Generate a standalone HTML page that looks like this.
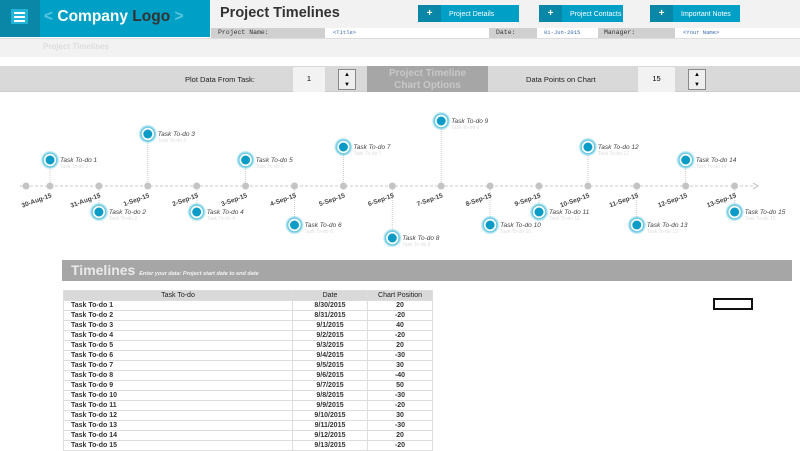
<!DOCTYPE html>
<html><head><meta charset="utf-8"><style>
*{margin:0;padding:0;box-sizing:border-box}
body{width:800px;height:450px;overflow:hidden;background:#fff;font-family:"Liberation Sans",sans-serif;position:relative}
.a{position:absolute}
.btn{position:absolute;top:5px;height:17px;background:#00a0c6;color:#fff;font-size:7px;line-height:17px}
.btn b{display:inline-block;width:23px;height:17px;background:#0a87a6;text-align:center;font-size:10px;margin-right:8px}
.mono{font-family:"Liberation Mono",monospace;font-size:6.5px;line-height:9px}
table{border-collapse:collapse;position:absolute;left:63px;top:290px;width:370px;font-size:7px;font-weight:bold;color:#333}
td,th{height:9.9px;line-height:9px;border:1px solid #ddd;padding:0}
th{background:#d9d9d9;font-weight:normal;color:#222}
td:first-child{padding-left:7px}
td:nth-child(2),td:nth-child(3){text-align:center}
</style></head><body>
<div class="a" style="left:0;top:0;width:800px;height:37px;background:#f2f2f2"></div>
<div class="a" style="left:0;top:0;width:210px;height:37px;background:#00a0c6"></div>
<div class="a" style="left:0;top:0;width:40px;height:37px;background:#0a87a6"></div>
<div class="a" style="left:11px;top:9px;width:17px;height:15px;background:#1fb4d8"></div>
<div class="a" style="left:14px;top:12px;width:11px;height:2px;background:#fff;box-shadow:0 4px 0 #fff,0 8px 0 #fff"></div>
<div class="a" style="left:44px;top:8px;font-size:15.5px;font-weight:bold;color:#fff"><span style="color:#5cc6e0">&lt;</span> Company <span style="color:#333">Logo</span> <span style="color:#5cc6e0">&gt;</span></div>
<div class="a" style="left:220px;top:5px;font-size:14.5px;font-weight:bold;color:#333">Project Timelines</div>
<div class="btn" style="left:418px;width:101px"><b>+</b>Project Details</div>
<div class="btn" style="left:539px;width:84px"><b>+</b>Project Contacts</div>
<div class="btn" style="left:650px;width:90px"><b>+</b>Important Notes</div>
<div class="a" style="left:211px;top:28px;width:589px;height:10px;background:#e8e8e8;border-top:1px solid #ccc"></div>
<div class="a mono" style="left:211px;top:28px;width:114px;height:10px;background:#d0d0d0;padding-left:7px;color:#333">Project Name:</div>
<div class="a mono" style="left:325px;top:28px;width:164px;height:10px;background:#fff;padding-left:8px;color:#3a6ab0;font-size:5.5px">&lt;Title&gt;</div>
<div class="a mono" style="left:489px;top:28px;width:48px;height:10px;background:#d0d0d0;padding-left:7px;color:#333">Date:</div>
<div class="a mono" style="left:537px;top:28px;width:61px;height:10px;background:#fff;padding-left:7px;color:#3a6ab0;font-size:5.5px">01-Jun-2015</div>
<div class="a mono" style="left:598px;top:28px;width:77px;height:10px;background:#d0d0d0;padding-left:6px;color:#333">Manager:</div>
<div class="a mono" style="left:675px;top:28px;width:125px;height:10px;background:#fff;padding-left:8px;color:#3a6ab0;font-size:5.5px">&lt;Your Name&gt;</div>
<div class="a" style="left:0;top:38px;width:800px;height:19px;background:#f2f2f2;border-top:1px solid #ddd"></div>
<div class="a" style="left:43px;top:42px;font-size:8px;font-weight:bold;color:#ddd">Project Timelines</div>
<div class="a" style="left:0;top:66px;width:800px;height:26px;background:#d9d9d9;border-bottom:1px solid #ccc"></div>
<div class="a" style="left:185px;top:75px;font-size:7.5px;color:#222">Plot Data From Task:</div>
<div class="a" style="left:293px;top:67px;width:32px;height:25px;background:#f2f2f2;font-size:7.5px;text-align:center;line-height:24px">1</div>
<div class="a" style="left:338px;top:69px;width:18px;height:21px;background:#eee;border:1px solid #888;font-size:6px;text-align:center;line-height:10px">▲<br>▼</div>
<div class="a" style="left:367px;top:66px;width:121px;height:26px;background:#a6a6a6;color:#c8c8c8;font-weight:bold;font-size:10px;text-align:center;line-height:12px;padding-top:2px">Project Timeline<br>Chart Options</div>
<div class="a" style="left:526px;top:75px;font-size:7.5px;color:#222">Data Points on Chart</div>
<div class="a" style="left:638px;top:67px;width:37px;height:25px;background:#f2f2f2;font-size:7.5px;text-align:center;line-height:24px">15</div>
<div class="a" style="left:688px;top:69px;width:18px;height:21px;background:#eee;border:1px solid #888;font-size:6px;text-align:center;line-height:10px">▲<br>▼</div>
<svg class="a" style="left:0;top:0" width="800" height="260" font-family="Liberation Sans,sans-serif">
<defs><radialGradient id="g"><stop offset="0.6" stop-color="#2bb3d6"/><stop offset="1" stop-color="#2bb3d6" stop-opacity="0"/></radialGradient></defs>
<line x1="20" y1="186" x2="755" y2="186" stroke="#c8c8c8" stroke-dasharray="3,2"/>
<path d="M753 183 L758 186 L753 189" fill="none" stroke="#bbb"/>
<g id="tl"></g>
</svg>
<div class="a" style="left:62px;top:260px;width:730px;height:21px;background:#a6a6a6"></div>
<div class="a" style="left:71px;top:262px;font-size:14px;font-weight:bold;color:#eaeaea">Timelines <span style="font-size:5.5px;font-style:italic;color:#f4f4f4;font-weight:bold">Enter your data: Project start date to end date</span></div>
<div class="a" style="left:713px;top:298px;width:40px;height:12px;border:2px solid #111"></div>
<table>
<tr><th style="width:229px">Task To-do</th><th style="width:75px">Date</th><th>Chart Position</th></tr>
<tr><td>Task To-do 1</td><td>8/30/2015</td><td>20</td></tr>
<tr><td>Task To-do 2</td><td>8/31/2015</td><td>-20</td></tr>
<tr><td>Task To-do 3</td><td>9/1/2015</td><td>40</td></tr>
<tr><td>Task To-do 4</td><td>9/2/2015</td><td>-20</td></tr>
<tr><td>Task To-do 5</td><td>9/3/2015</td><td>20</td></tr>
<tr><td>Task To-do 6</td><td>9/4/2015</td><td>-30</td></tr>
<tr><td>Task To-do 7</td><td>9/5/2015</td><td>30</td></tr>
<tr><td>Task To-do 8</td><td>9/6/2015</td><td>-40</td></tr>
<tr><td>Task To-do 9</td><td>9/7/2015</td><td>50</td></tr>
<tr><td>Task To-do 10</td><td>9/8/2015</td><td>-30</td></tr>
<tr><td>Task To-do 11</td><td>9/9/2015</td><td>-20</td></tr>
<tr><td>Task To-do 12</td><td>9/10/2015</td><td>30</td></tr>
<tr><td>Task To-do 13</td><td>9/11/2015</td><td>-30</td></tr>
<tr><td>Task To-do 14</td><td>9/12/2015</td><td>20</td></tr>
<tr><td>Task To-do 15</td><td>9/13/2015</td><td>-20</td></tr>
</table>
<script>
var d=["30-Aug-15","31-Aug-15","1-Sep-15","2-Sep-15","3-Sep-15","4-Sep-15","5-Sep-15","6-Sep-15","7-Sep-15","8-Sep-15","9-Sep-15","10-Sep-15","11-Sep-15","12-Sep-15","13-Sep-15"];
var p=[20,-20,40,-20,20,-30,30,-40,50,-30,-20,30,-30,20,-20];
var s='<circle cx="26" cy="186" r="3.5" fill="#c4c4c4"/>';
for(var i=0;i<15;i++){var x=50+48.9*i,y=186-1.3*p[i];
s+='<line x1="'+x+'" y1="186" x2="'+x+'" y2="'+y+'" stroke="#ccc" stroke-dasharray="1,1"/>';
s+='<circle cx="'+x+'" cy="186" r="3.5" fill="#c4c4c4"/>';
s+='<text x="'+(x+2)+'" y="197" font-size="6.5" font-weight="bold" fill="#444" text-anchor="end" transform="rotate(-20 '+(x+2)+' 197)">'+d[i]+'</text>';
s+='<circle cx="'+x+'" cy="'+y+'" r="9.5" fill="url(#g)"/><circle cx="'+x+'" cy="'+y+'" r="6.2" fill="#fff"/><circle cx="'+x+'" cy="'+y+'" r="4.5" fill="#0a9cc6"/>';
s+='<text x="'+(x+10)+'" y="'+(y+2)+'" font-size="6.5" font-style="italic" fill="#444">Task To-do '+(i+1)+'</text>';
s+='<text x="'+(x+10)+'" y="'+(y+8)+'" font-size="5" fill="#ddd">Task To-do '+(i+1)+'</text>';}
document.getElementById('tl').innerHTML=s;
</script>
</body></html>
